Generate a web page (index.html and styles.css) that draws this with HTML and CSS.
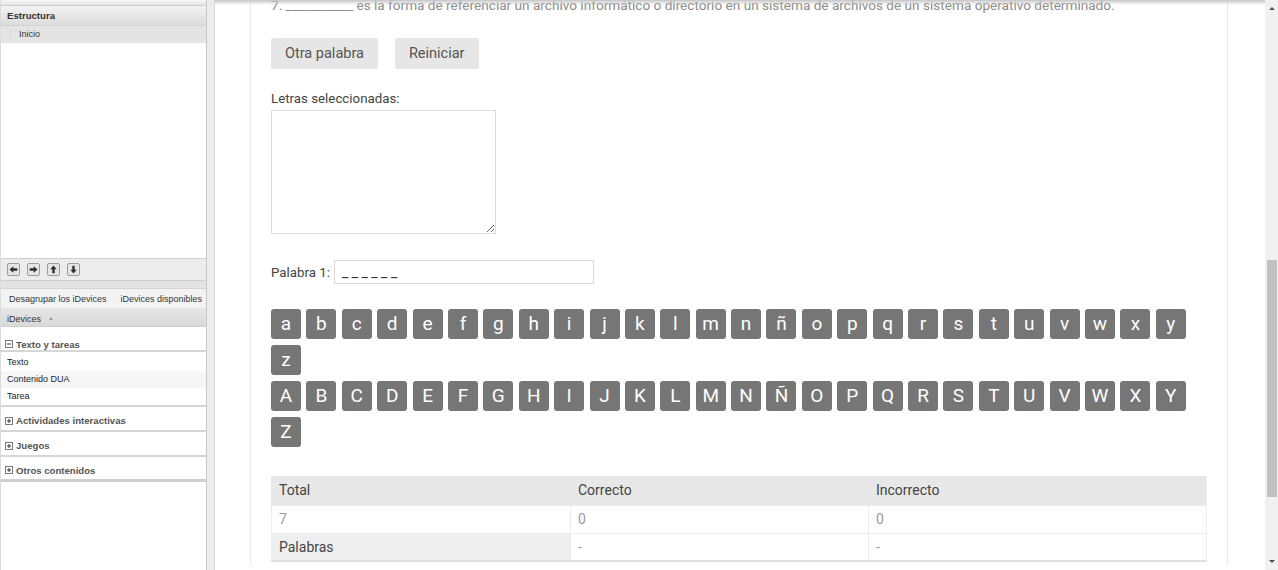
FILE: index.html
```html
<!DOCTYPE html>
<html lang="es">
<head>
<meta charset="utf-8">
<title>iDevice - Palabras</title>
<link rel="stylesheet" href="styles.css">
</head>
<body>
<aside class="sidebar">
  <div class="sb-top"></div>
  <div class="panel-head">Estructura</div>
  <div class="tree-row selected"><span class="tree-line"></span>Inicio</div>
  <div class="tree-body"></div>
  <div class="toolbar">
    <svg class="tb-ico" width="13" height="13" viewBox="0 0 13 13"><rect x="0.5" y="0.5" width="12" height="12" rx="1.5" fill="#e6e6e6" stroke="#9c9c9c"/><path d="M2.5 6.5 L6.3 3.3 V5.3 H10.3 V7.7 H6.3 V9.7 Z" fill="#2e2e2e"/></svg>
    <svg class="tb-ico" width="13" height="13" viewBox="0 0 13 13"><rect x="0.5" y="0.5" width="12" height="12" rx="1.5" fill="#e6e6e6" stroke="#9c9c9c"/><path d="M10.5 6.5 L6.7 3.3 V5.3 H2.7 V7.7 H6.7 V9.7 Z" fill="#2e2e2e"/></svg>
    <svg class="tb-ico" width="13" height="13" viewBox="0 0 13 13"><rect x="0.5" y="0.5" width="12" height="12" rx="1.5" fill="#e6e6e6" stroke="#9c9c9c"/><path d="M6.5 2.5 L9.7 6.3 H7.7 V10.3 H5.3 V6.3 H3.3 Z" fill="#2e2e2e"/></svg>
    <svg class="tb-ico" width="13" height="13" viewBox="0 0 13 13"><rect x="0.5" y="0.5" width="12" height="12" rx="1.5" fill="#e6e6e6" stroke="#9c9c9c"/><path d="M6.5 10.5 L9.7 6.7 H7.7 V2.7 H5.3 V6.7 H3.3 Z" fill="#2e2e2e"/></svg>
  </div>
  <div class="sb-gap"></div>
  <div class="tabs"><span>Desagrupar los iDevices</span><span>iDevices disponibles</span></div>
  <div class="idev-head">iDevices <span class="sort-arrow"></span></div>
  <div class="group-head open"><svg width="8" height="8" viewBox="0 0 8 8"><rect x="0.5" y="0.5" width="7" height="7" fill="#fff" stroke="#7a7a7a"/><path d="M2 4H6" stroke="#333"/></svg>Texto y tareas</div>
  <ul class="group-items">
    <li>Texto</li>
    <li class="alt">Contenido DUA</li>
    <li>Tarea</li>
  </ul>
  <div class="group-head"><svg width="8" height="8" viewBox="0 0 8 8"><rect x="0.5" y="0.5" width="7" height="7" fill="#fff" stroke="#7a7a7a"/><path d="M2 4H6M4 2V6" stroke="#333"/></svg>Actividades interactivas</div>
  <div class="group-head"><svg width="8" height="8" viewBox="0 0 8 8"><rect x="0.5" y="0.5" width="7" height="7" fill="#fff" stroke="#7a7a7a"/><path d="M2 4H6M4 2V6" stroke="#333"/></svg>Juegos</div>
  <div class="group-head last"><svg width="8" height="8" viewBox="0 0 8 8"><rect x="0.5" y="0.5" width="7" height="7" fill="#fff" stroke="#7a7a7a"/><path d="M2 4H6M4 2V6" stroke="#333"/></svg>Otros contenidos</div>
</aside>
<div class="splitter"></div>
<main class="main">
  <div class="topshadow"></div>
  <section class="card">
    <p class="question">7. ___________ es la forma de referenciar un archivo informático o directorio en un sistema de archivos de un sistema operativo determinado.</p>
    <div class="actions">
      <button class="btn">Otra palabra</button>
      <button class="btn">Reiniciar</button>
    </div>
    <label class="label">Letras seleccionadas:</label>
    <textarea class="selected-letters"></textarea>
    <div class="word-row">
      <span class="word-label">Palabra 1:</span>
      <div class="word-input">_ _ _ _ _ _</div>
    </div>
    <div class="letters">
      <span class="key">a</span><span class="key">b</span><span class="key">c</span><span class="key">d</span><span class="key">e</span><span class="key">f</span><span class="key">g</span><span class="key">h</span><span class="key">i</span><span class="key">j</span><span class="key">k</span><span class="key">l</span><span class="key">m</span><span class="key">n</span><span class="key">ñ</span><span class="key">o</span><span class="key">p</span><span class="key">q</span><span class="key">r</span><span class="key">s</span><span class="key">t</span><span class="key">u</span><span class="key">v</span><span class="key">w</span><span class="key">x</span><span class="key">y</span><span class="key">z</span>
    </div>
    <div class="letters upper">
      <span class="key">A</span><span class="key">B</span><span class="key">C</span><span class="key">D</span><span class="key">E</span><span class="key">F</span><span class="key">G</span><span class="key">H</span><span class="key">I</span><span class="key">J</span><span class="key">K</span><span class="key">L</span><span class="key">M</span><span class="key">N</span><span class="key">Ñ</span><span class="key">O</span><span class="key">P</span><span class="key">Q</span><span class="key">R</span><span class="key">S</span><span class="key">T</span><span class="key">U</span><span class="key">V</span><span class="key">W</span><span class="key">X</span><span class="key">Y</span><span class="key">Z</span>
    </div>
    <table class="results">
      <colgroup><col class="c1"><col class="c2"><col class="c3"></colgroup>
      <thead>
        <tr><th>Total</th><th>Correcto</th><th>Incorrecto</th></tr>
      </thead>
      <tbody>
        <tr><td>7</td><td>0</td><td>0</td></tr>
        <tr><td class="rowhead">Palabras</td><td>-</td><td>-</td></tr>
      </tbody>
    </table>
  </section>
</main>
<div class="scrollbar">
  <span class="sc-arrow up"></span>
  <div class="sc-track"><div class="sc-thumb"></div></div>
  <span class="sc-arrow down"></span>
</div>
</body>
</html>
```
FILE: styles.css
```css
* { box-sizing: border-box; }
html, body { margin: 0; height: 570px; overflow: hidden; }
body {
  display: flex;
  background: #fff;
  font-family: Roboto, "Open Sans", sans-serif;
}

/* ---------- Sidebar ---------- */
.sidebar {
  width: 207px;
  flex: none;
  display: flex;
  flex-direction: column;
  background: #fff;
  border-right: 1px solid #c9c9c9;
  border-left: 1px solid #dcdcdc;
  font-family: "Liberation Sans", Arial, sans-serif;
  font-size: 9px;
  color: #222;
}
.sb-top {
  height: 6px;
  flex: none;
  background: linear-gradient(#f6f6f6, #e6e6e6);
  border-bottom: 1px solid #cfcfcf;
}
.panel-head {
  height: 20px;
  flex: none;
  line-height: 19px;
  padding-left: 6px;
  font-size: 9.6px;
  font-weight: bold;
  color: #333;
  background: linear-gradient(#f3f3f3, #dcdcdc);
  border-bottom: 1px solid #d2d2d2;
}
.tree-row {
  height: 17px;
  flex: none;
  line-height: 17px;
  padding-left: 18px;
  position: relative;
  color: #333;
}
.tree-row.selected { background: #e4e4e4; }
.tree-line {
  position: absolute;
  left: 9px;
  top: 4px;
  height: 8px;
  border-left: 1px dotted #c8c8c8;
}
.tree-body {
  height: 215px;
  flex: none;
  background: #fff;
}
.toolbar {
  height: 23px;
  flex: none;
  display: flex;
  align-items: center;
  gap: 7px;
  padding-left: 6px;
  background: #ececec;
  border-top: 1px solid #cfcfcf;
  border-bottom: 1px solid #cfcfcf;
}
.tb-ico { display: block; }
.sb-gap {
  height: 8px;
  flex: none;
  background: #e3e3e3;
  border-bottom: 1px solid #d4d4d4;
}
.tabs {
  height: 19px;
  flex: none;
  display: flex;
  align-items: center;
  gap: 14px;
  padding-left: 8px;
  background: #f3f3f3;
  color: #333;
}
.idev-head {
  height: 19px;
  flex: none;
  line-height: 19px;
  padding: 2px 0 0 6px;
  background: linear-gradient(#e6e6e6, #dadada);
  border-bottom: 1px solid #d0d0d0;
  color: #333;
}
.sort-arrow {
  display: inline-block;
  margin-left: 5px;
  vertical-align: 2px;
  border-left: 2.5px solid transparent;
  border-right: 2.5px solid transparent;
  border-bottom: 3px solid #999;
}
.group-head {
  display: flex;
  flex: none;
  align-items: center;
  gap: 3px;
  height: 25px;
  padding: 7px 0 3px 4px;
  font-size: 9.6px;
  font-weight: bold;
  color: #555;
  border-bottom: 2px solid #d6d6d6;
}
.group-head.open { padding: 11px 0 0 4px; }
.group-head svg { flex: none; }
.group-head.last { border-bottom: 3px solid #cfcfcf; }
.group-items {
  list-style: none;
  flex: none;
  margin: 0;
  padding: 2px 0 0;
  border-bottom: 2px solid #d6d6d6;
}
.group-items li {
  height: 17px;
  line-height: 17px;
  padding-left: 6px;
  color: #222;
}
.group-items li.alt { background: #f6f6f6; }

/* ---------- Splitter / main ---------- */
.splitter {
  width: 8px;
  flex: none;
  background: #ededed;
  border-right: 1px solid #d6d6d6;
}
.main {
  flex: 1;
  position: relative;
  overflow: hidden;
  background: #fff;
}
.topshadow {
  position: absolute;
  left: 0; right: 0; top: 0;
  height: 5px;
  background: linear-gradient(#c6c6c6, rgba(255,255,255,0));
}
.card {
  margin-left: 35px;
  width: 978px;
  height: 100%;
  padding: 0 20px;
  border-left: 1px solid #e9e9e9;
  border-right: 1px solid #e9e9e9;
  background: #fff;
  color: #444;
  font-size: 13.3px;
}
.question {
  margin: -5px 0 0;
  line-height: 20px;
  font-size: 13.6px;
  color: #8c8c8c;
  white-space: nowrap;
}
.actions {
  display: flex;
  gap: 17px;
  margin-top: 23px;
}
.btn {
  height: 31px;
  padding: 0 14px;
  border: none;
  border-radius: 2px;
  background: #e6e6e6;
  color: #555;
  font-family: inherit;
  font-size: 14.5px;
}
.label {
  display: block;
  margin-top: 20px;
  line-height: 20px;
  color: #444;
}
.selected-letters {
  display: block;
  margin-top: 1px;
  width: 225px;
  height: 124px;
  border: 1px solid #dcdcdc;
  background: #fff;
  resize: both;
}
.word-row {
  display: flex;
  align-items: center;
  gap: 4px;
  margin-top: 26px;
}
.word-label { color: #444; }
.word-input {
  width: 260px;
  height: 24px;
  line-height: 22px;
  padding-left: 7px;
  border: 1px solid #dcdcdc;
  color: #333;
  font-size: 14px;
}
.letters {
  display: flex;
  flex-wrap: wrap;
  column-gap: 5.4px;
  row-gap: 6px;
  margin-top: 25px;
}
.letters.upper { margin-top: 6px; }
.key {
  width: 30px;
  height: 30px;
  line-height: 30px;
  text-align: center;
  border-radius: 3px;
  background: #767676;
  color: #fff;
  font-size: 19px;
}
.results {
  margin-top: 29px;
  width: 936px;
  border-collapse: collapse;
  table-layout: fixed;
  border-bottom: 2px solid #e0e0e0;
  border-left: 1px solid #eee;
  border-right: 1px solid #eee;
  font-size: 14px;
}
.c1 { width: 299px; }
.c2 { width: 298px; }
.results th, .results td {
  text-align: left;
  font-weight: normal;
  padding: 0 7px;
  border-left: 1px solid #ececec;
}
.results th {
  height: 29px;
  background: #e8e8e8;
  color: #444;
  border-left-color: #e8e8e8;
}
.results td {
  height: 28px;
  color: #9a9a9a;
  border-top: 1px solid #ececec;
}
.results td.rowhead { background: #efefef; color: #444; }

/* ---------- Scrollbar ---------- */
.scrollbar {
  width: 13px;
  flex: none;
  display: flex;
  flex-direction: column;
  background: #f1f1f1;
}
.sc-arrow {
  height: 17px;
  flex: none;
  display: flex;
  justify-content: center;
  align-items: center;
}
.sc-arrow::before {
  content: "";
  border-left: 3px solid transparent;
  border-right: 3px solid transparent;
}
.sc-arrow.up::before { border-bottom: 3px solid #505050; }
.sc-arrow.down::before { border-top: 3px solid #505050; }
.sc-track {
  flex: 1;
  padding-top: 243px;
}
.sc-thumb {
  margin: 0 1px 0 2px;
  height: 237px;
  background: #c1c1c1;
}
```
